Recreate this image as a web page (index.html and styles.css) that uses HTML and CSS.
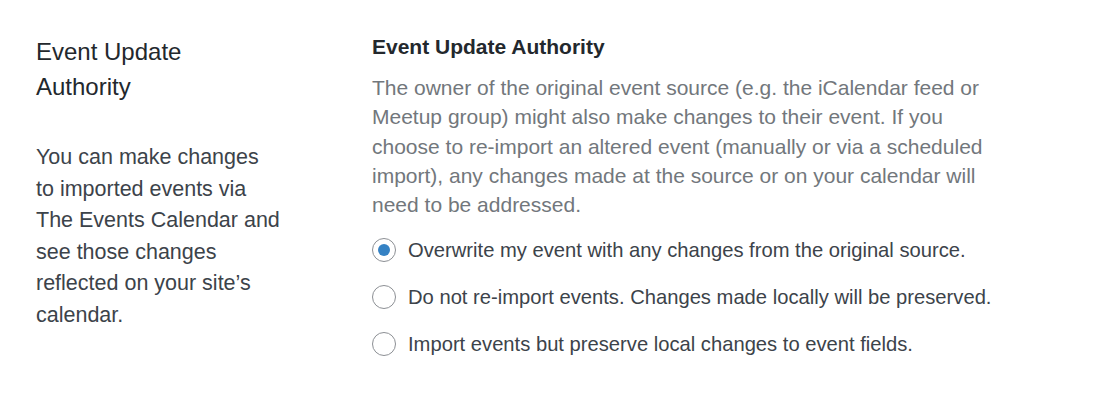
FILE: index.html
```html
<!DOCTYPE html>
<html lang="en">
<head>
    <meta charset="UTF-8">
    <title>Event Update Authority</title>
    <link rel="stylesheet" href="styles.css">
</head>
<body>
    <div class="settings-row">
        <!-- Left column -->
        <div class="row-label">
            <h2 class="label-title">Event Update Authority</h2>
            <p class="label-help">You can make changes to imported events via The Events Calendar and see those changes reflected on your site&rsquo;s calendar.</p>
        </div>

        <!-- Right column -->
        <div class="row-field">
            <h3 class="field-title">Event Update Authority</h3>
            <p class="field-desc">The owner of the original event source (e.g. the iCalendar feed or Meetup group) might also make changes to their event. If you choose to re-import an altered event (manually or via a scheduled import), any changes made at the source or on your calendar will need to be addressed.</p>

            <div class="options">
                <label class="option">
                    <span class="radio checked"></span>
                    Overwrite my event with any changes from the original source.
                </label>
                <label class="option">
                    <span class="radio"></span>
                    Do not re-import events. Changes made locally will be preserved.
                </label>
                <label class="option">
                    <span class="radio"></span>
                    Import events but preserve local changes to event fields.
                </label>
            </div>
        </div>
    </div>
</body>
</html>
```

FILE: styles.css
```css
/* Reset */
* {
    margin: 0;
    padding: 0;
    box-sizing: border-box;
}

:root {
    --title-color: #23282d;
    --text-color: #3c434a;
    --muted-color: #72777c;
    --radio-border: #8c8f94;
    --accent-color: #3582c4;
}

html, body {
    background-color: #fff;
    font-family: 'Liberation Sans', Arial, sans-serif;
    color: var(--text-color);
}

.settings-row {
    display: flex;
    padding: 34px 0 0 36px;
}

/* Left column */
.row-label {
    width: 336px;
    flex-shrink: 0;
}

.label-title {
    width: 200px;
    font-size: 24px;
    font-weight: normal;
    line-height: 35px;
    color: var(--title-color);
}

.label-help {
    width: 244px;
    margin-top: 38px;
    font-size: 21.5px;
    line-height: 31.6px;
}

/* Right column */
.row-field {
    width: 618px;
    padding-top: 2px;
}

.field-title {
    font-size: 21px;
    font-weight: bold;
    line-height: 22px;
    color: var(--title-color);
}

.field-desc {
    margin-top: 15px;
    font-size: 21px;
    line-height: 29.25px;
    color: var(--muted-color);
}

.options {
    display: flex;
    flex-direction: column;
    gap: 23px;
    margin-top: 19px;
}

.option {
    display: flex;
    align-items: center;
    gap: 12px;
    font-size: 20.2px;
    line-height: 24px;
    white-space: nowrap;
    color: var(--text-color);
}

.radio {
    width: 24px;
    height: 24px;
    border: 1px solid var(--radio-border);
    border-radius: 50%;
    display: flex;
    justify-content: center;
    align-items: center;
    flex-shrink: 0;
}

.radio.checked::before {
    content: '';
    width: 12px;
    height: 12px;
    border-radius: 50%;
    background-color: var(--accent-color);
}
```
